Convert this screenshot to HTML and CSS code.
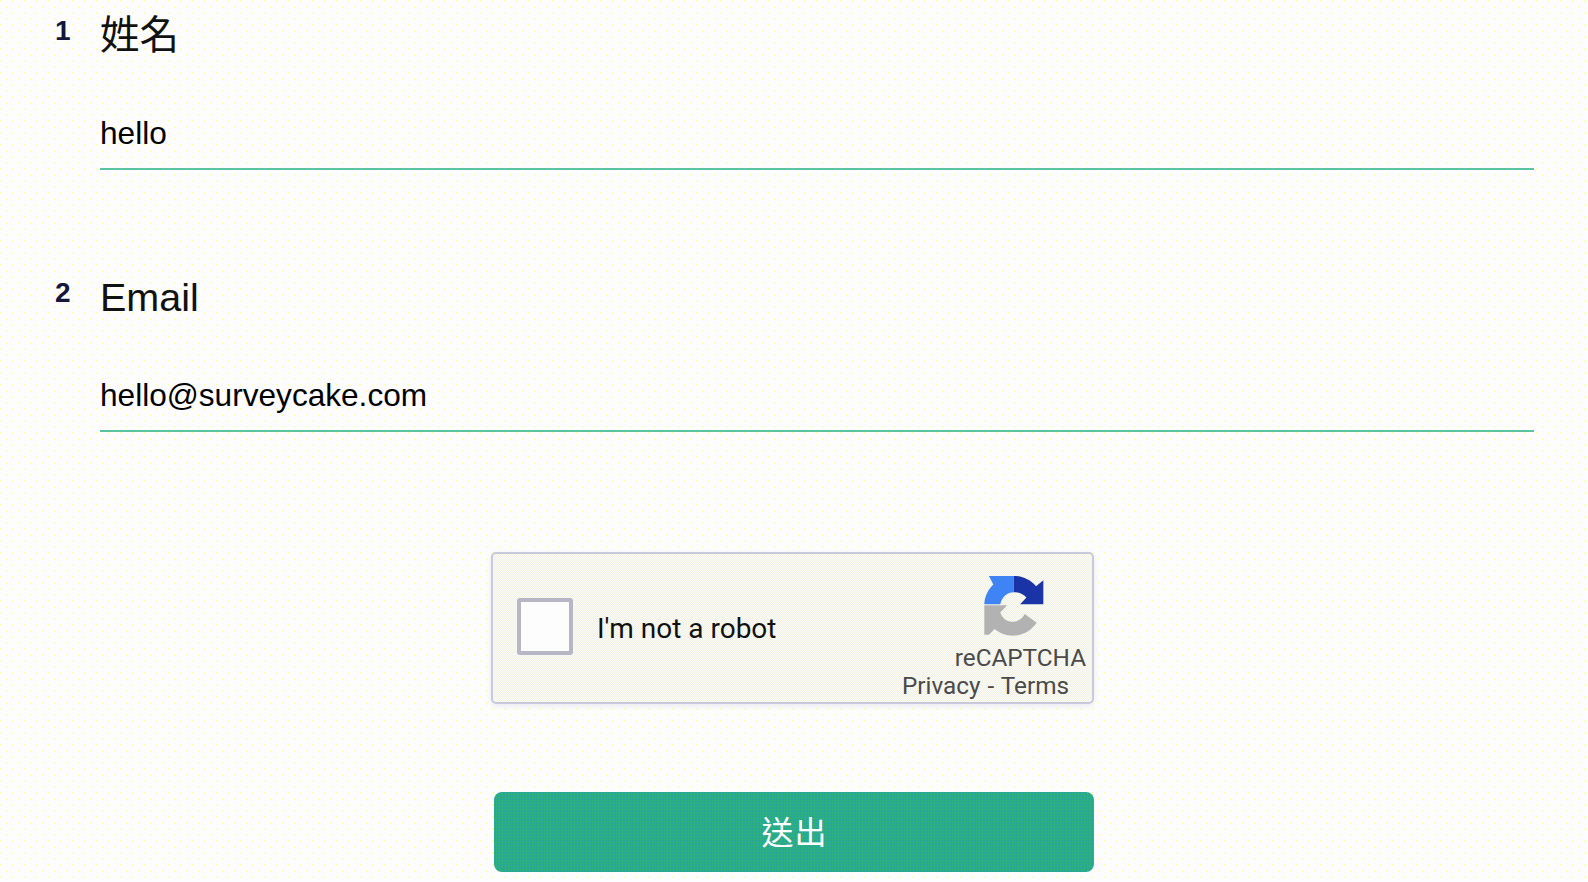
FILE: index.html
```html
<!DOCTYPE html>
<html lang="zh-Hant">
<head>
  <meta charset="UTF-8">
  <title>SurveyCake</title>
  <link rel="stylesheet" href="styles.css">
</head>

<body>
  <form class="survey">
    <!-- Q1 -->
    <div class="question">
      <div class="question-no">1</div>
      <div class="question-body">
        <div class="question-title">姓名</div>
        <div class="answer">hello</div>
      </div>
    </div>

    <!-- Q2 -->
    <div class="question">
      <div class="question-no">2</div>
      <div class="question-body">
        <div class="question-title">Email</div>
        <div class="answer">hello@surveycake.com</div>
      </div>
    </div>

    <!-- reCAPTCHA -->
    <div class="captcha">
      <div class="captcha-check"></div>
      <div class="captcha-label">I'm not a robot</div>
      <div class="captcha-brand">
        <svg class="captcha-logo" viewBox="10 12 184 184" aria-hidden="true">
          <path fill="#3f84f4" d="M14 100 C15 76 26 56 41 41 L28 15 L103 15 L103 64 C84 64 68 76 62 100 Z"/>
          <path fill="#1a34a8" d="M103 15 C130 15 154 27 170 46 L192 28 L192 100 L122 100 L141 80 C132 70 118 64 103 64 Z"/>
          <path fill="#b2b2b2" d="M14 103 L83 103 L62 125 C68 143 83 153 100 153 C115 153 127 145 136 130 L172 156 C155 180 130 195 100 195 C80 195 60 188 45 175 L28 192 L14 192 Z"/>
        </svg>
        <div class="captcha-name">reCAPTCHA</div>
        <div class="captcha-links">Privacy - Terms</div>
      </div>
    </div>

    <button class="submit" type="button">送出</button>
  </form>
</body>
</html>
```

FILE: styles.css
```css
/* ===============================
   BASE
=============================== */
html, body {
  margin: 0;
  padding: 0;
  height: 100%;
  overflow: hidden;
}
body {
  /* dithered yellow dots on white, as in the capture */
  background-color: #fdfdff;
  background-image:
    radial-gradient(circle at 1px 1px, #ffffb4 0.7px, transparent 1px),
    radial-gradient(circle at 7px 7px, #ffffb4 0.7px, transparent 1px);
  background-size: 12px 12px;
  font-family: "Liberation Sans", "Noto Sans CJK TC", sans-serif;
  color: #111;
}

.survey {
  display: flex;
  flex-direction: column;
  padding: 0 54px 0 55px;
}

/* ===============================
   QUESTIONS
=============================== */
.question {
  display: flex;
  height: 262px;
}
.question-no {
  width: 45px;
  padding-top: 15px;
  font-size: 28px;
  line-height: 32px;
  font-weight: bold;
  color: #14163c;
}
.question-body {
  flex: 1;
}
.question-title {
  height: 70px;
  padding-top: 12px;
  box-sizing: border-box;
  font-size: 39.5px;
  line-height: 46px;
  color: #111;
}
.answer {
  margin-top: 32px;
  height: 68px;
  box-sizing: border-box;
  padding-top: 13px;
  font-size: 31.6px;
  line-height: 36px;
  color: #000;
  border-bottom: 2px solid #5cc3a0;
}

/* ===============================
   RECAPTCHA
=============================== */
.captcha {
  display: flex;
  align-items: flex-start;
  align-self: center;
  width: 603px;
  height: 152px;
  margin-top: 28px;
  margin-left: -4px;
  box-sizing: border-box;
  border: 2px solid #c9c9dc;
  border-radius: 5px;
  background: repeating-conic-gradient(#fbfbea 0 25%, #f1f1f3 0 50%) 0 0 / 2px 2px;
  box-shadow: 0 2px 6px rgba(0, 0, 0, 0.08);
  font-family: Roboto, sans-serif;
}
.captcha-check {
  flex: none;
  width: 56px;
  height: 57px;
  margin: 44px 24px 0 24px;
  box-sizing: border-box;
  border: 4px solid #b6b6c4;
  border-radius: 3px;
  background: #fdfdfd;
}
.captcha-label {
  flex: 1;
  margin-top: 57px;
  font-size: 28px;
  line-height: 36px;
  color: #111;
}
.captcha-brand {
  flex: none;
  display: flex;
  flex-direction: column;
  align-items: center;
  width: 184px;
  margin-right: 6px;
  color: #4a4a4a;
}
.captcha-logo {
  width: 61px;
  height: 61px;
  margin-top: 21px;
  margin-left: 39px;
}
.captcha-name {
  align-self: flex-end;
  margin-top: 7px;
  font-size: 24.3px;
  line-height: 29px;
}
.captcha-links {
  align-self: flex-start;
  font-size: 24.3px;
  line-height: 28px;
  word-spacing: 1px;
}

/* ===============================
   SUBMIT
=============================== */
.submit {
  align-self: center;
  display: block;
  width: 600px;
  height: 80px;
  margin-top: 88px;
  margin-left: -2px;
  padding: 0 0 4px 2px;
  border: 0;
  border-radius: 8px;
  background-color: #2cb07c;
  background-image: radial-gradient(circle at 1px 1px, #28a69a 1px, transparent 1.2px);
  background-size: 3px 3px;
  color: #fff;
  font-family: "Noto Sans CJK TC", sans-serif;
  font-size: 32px;
  font-weight: 400;
  letter-spacing: 1px;
}
```
